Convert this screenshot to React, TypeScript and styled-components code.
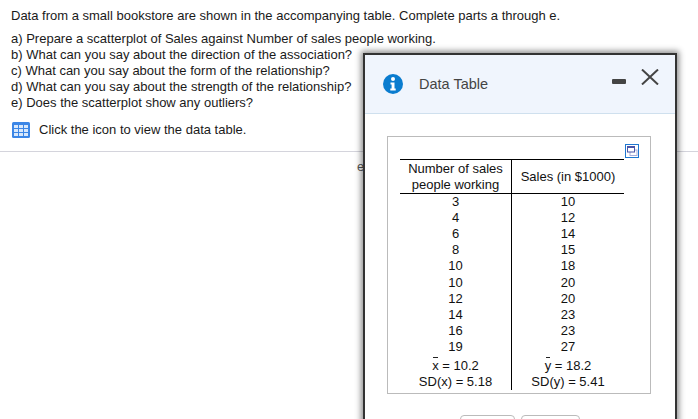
import React from "react";
import styled, { createGlobalStyle } from "styled-components";

const GlobalStyle = createGlobalStyle`
  html, body {
    margin: 0;
    padding: 0;
    height: 100%;
    overflow: hidden;
    background: #fff;
  }
  body {
    font-family: "Liberation Sans", Arial, sans-serif;
    color: #1a1a1a;
  }
`;

const Page = styled.div`
  position: relative;
  width: 698px;
  height: 419px;
  overflow: hidden;
`;

const Question = styled.main`
  display: flex;
  flex-direction: column;
  padding: 8px 0 0 11px;
  font-size: 13px;
  line-height: 16px;
`;

const Intro = styled.p`
  margin: 0 0 7px;
`;

const Parts = styled.ol`
  margin: 0 0 11px;
  padding: 0;
  list-style: none;
`;

const IconRow = styled.div`
  display: flex;
  align-items: center;
  gap: 9px;
  height: 16px;
  margin-left: 1px;
`;

const Divider = styled.hr<{ $top: number }>`
  margin: ${({ $top }) => $top}px 0 0 -11px;
  border: none;
  border-top: 1px solid #d4d4dc;
`;

const HiddenWord = styled.div`
  height: 16px;
  margin-top: 7px;
  padding-left: 346px;
  color: #555;
`;

const Dialog = styled.section`
  position: absolute;
  left: 363px;
  top: 53px;
  width: 310px;
  height: 420px;
  background: #fff;
  border: 2px solid #333;
  box-shadow: 0 0 6px 2px rgba(0, 0, 0, 0.45);
`;

const TitleBar = styled.header`
  display: flex;
  align-items: center;
  height: 58px;
  padding: 0 16px 0 18px;
  background: #f0f5fd;
  border-bottom: 1px solid #cfe0ee;
`;

const Title = styled.h2`
  flex: 1;
  margin: 0 0 0 16px;
  font-size: 14.5px;
  font-weight: normal;
  color: #444;
`;

const WindowControls = styled.div`
  display: flex;
  align-items: flex-start;
  gap: 15px;
  margin-top: -14px;
`;

const MinimizeBar = styled.span`
  display: block;
  width: 14px;
  height: 5px;
  margin-top: 10px;
  border-radius: 1px;
  background: #444;
`;

const Frame = styled.div`
  position: relative;
  width: 264px;
  height: 258px;
  margin: 22px 0 0 22px;
  padding: 22px 0 0 12px;
  box-sizing: border-box;
  border: 1px solid #bbb;
`;

const ExpandButton = styled.button`
  position: absolute;
  top: 7px;
  right: 11px;
  display: flex;
  width: 14px;
  height: 14px;
  padding: 0;
  border: none;
  background: none;
`;

const DataGrid = styled.table`
  width: 224px;
  border-collapse: collapse;
  table-layout: fixed;
  font-size: 13px;
  line-height: 16px;
  color: #111;
`;

const HeadCell = styled.th`
  height: 33px;
  padding: 0;
  font-weight: normal;
  text-align: center;
  border-top: 1px solid #000;
  border-bottom: 1px solid #000;
  &:first-child {
    width: 111px;
    border-right: 1px solid #000;
  }
`;

const Cell = styled.td<{ $tall?: boolean }>`
  height: ${({ $tall }) => ($tall ? "19px" : "16.1px")};
  padding: 0;
  text-align: center;
  vertical-align: bottom;
  &:first-child {
    border-right: 1px solid #000;
  }
`;

const Bar = styled.span`
  position: relative;
  &::before {
    content: "";
    position: absolute;
    left: 1px;
    right: 1px;
    top: -1px;
    height: 1px;
    background: #222;
  }
`;

const FooterButtons = styled.div`
  display: flex;
  gap: 6px;
  margin: 21px 0 0 95px;
`;

const FooterButton = styled.button<{ $w: number }>`
  width: ${({ $w }) => $w}px;
  height: 28px;
  border: 1px solid #bbb;
  border-radius: 4px;
  background: #fff;
`;

const rows: [number, number][] = [
  [3, 10],
  [4, 12],
  [6, 14],
  [8, 15],
  [10, 18],
  [10, 20],
  [12, 20],
  [14, 23],
  [16, 23],
  [19, 27],
];

const parts = [
  "a) Prepare a scatterplot of Sales against Number of sales people working.",
  "b) What can you say about the direction of the association?",
  "c) What can you say about the form of the relationship?",
  "d) What can you say about the strength of the relationship?",
  "e) Does the scatterplot show any outliers?",
];

const GridIcon = () => (
  <svg width="18" height="16" viewBox="0 0 18 16">
    <rect width="18" height="16" rx="1.5" fill="#3b86e6" />
    {[2, 7, 12].map((x) =>
      [3, 7, 11].map((y) => (
        <rect key={`${x}-${y}`} x={x} y={y} width="4" height="3" fill="#d8e8fb" />
      ))
    )}
  </svg>
);

const InfoIcon = () => (
  <svg width="20" height="20" viewBox="0 0 20 20">
    <circle cx="10" cy="10" r="10" fill="#0a7ccf" />
    <circle cx="10" cy="5" r="2" fill="#fff" />
    <path d="M7.5 8.5h4v6h1.2v2H7.3v-2h1.3v-4H7.5z" fill="#fff" />
  </svg>
);

const CloseIcon = () => (
  <svg width="18" height="16" viewBox="0 0 18 16">
    <path d="M1 0.5L17 15.5M17 0.5L1 15.5" stroke="#444" strokeWidth="2" fill="none" />
  </svg>
);

const ExpandIcon = () => (
  <svg width="14" height="14" viewBox="0 0 14 14">
    <rect x="0.5" y="0.5" width="13" height="13" fill="#fff" stroke="#1f78d1" />
    <rect x="5" y="6" width="7" height="5.5" fill="#fff" stroke="#a9aedb" />
    <rect x="2.5" y="2.5" width="7" height="5.5" fill="#fff" stroke="#4a55a8" />
    <rect x="2.5" y="2.5" width="7" height="1.5" fill="#4a55a8" />
  </svg>
);

const App = () => {
  return (
    <Page>
      <GlobalStyle />
      <Question>
        <Intro>Data from a small bookstore are shown in the accompanying table. Complete parts a through e.</Intro>
        <Parts>
          {parts.map((part) => (
            <li key={part}>{part}</li>
          ))}
        </Parts>
        <IconRow>
          <GridIcon />
          Click the icon to view the data table.
        </IconRow>
        <Divider $top={13} />
        <HiddenWord>ed</HiddenWord>
      </Question>

      <Dialog>
        <TitleBar>
          <InfoIcon />
          <Title>Data Table</Title>
          <WindowControls>
            <MinimizeBar />
            <CloseIcon />
          </WindowControls>
        </TitleBar>
        <Frame>
          <ExpandButton>
            <ExpandIcon />
          </ExpandButton>
          <DataGrid>
            <thead>
              <tr>
                <HeadCell>
                  Number of sales
                  <br />
                  people working
                </HeadCell>
                <HeadCell>Sales (in $1000)</HeadCell>
              </tr>
            </thead>
            <tbody>
              {rows.map(([people, sales], i) => (
                <tr key={i}>
                  <Cell>{people}</Cell>
                  <Cell>{sales}</Cell>
                </tr>
              ))}
              <tr>
                <Cell $tall>
                  <Bar>x</Bar> = 10.2
                </Cell>
                <Cell $tall>
                  <Bar>y</Bar> = 18.2
                </Cell>
              </tr>
              <tr>
                <Cell>SD(x) = 5.18</Cell>
                <Cell>SD(y) = 5.41</Cell>
              </tr>
            </tbody>
          </DataGrid>
        </Frame>
        <FooterButtons>
          <FooterButton $w={55} />
          <FooterButton $w={59} />
        </FooterButtons>
      </Dialog>
    </Page>
  );
};

export default App;
